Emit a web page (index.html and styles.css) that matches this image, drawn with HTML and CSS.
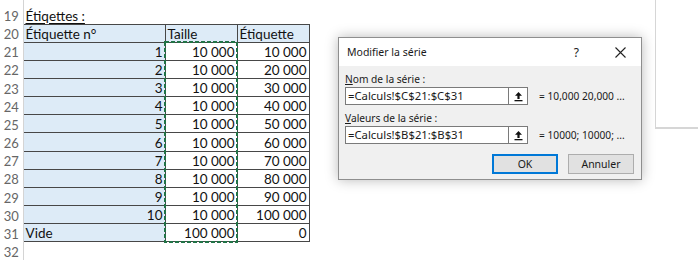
FILE: index.html
```html
<!DOCTYPE html>
<html lang="fr">
<head>
    <meta charset="UTF-8">
    <title>Calculs - Étiquettes</title>
    <link rel="stylesheet" href="styles.css">
</head>
<body>
    <div class="sheet">
        <table class="grid">
            <colgroup>
                <col class="c-num">
                <col class="c-a">
                <col class="c-b">
                <col class="c-c">
            </colgroup>
            <tr class="partial"><td class="num"></td><td></td><td></td><td></td></tr>
            <tr><td class="num">19</td><td class="title"><u>Étiqettes :</u></td><td></td><td></td></tr>
            <tr class="head">
                <td class="num">20</td>
                <td class="box blue">Étiquette n°</td>
                <td class="box blue">Taille</td>
                <td class="box blue">Étiquette</td>
            </tr>
            <tr><td class="num">21</td><td class="box blue r">1</td><td class="box r">10 000</td><td class="box r">10 000</td></tr>
            <tr><td class="num">22</td><td class="box blue r">2</td><td class="box r">10 000</td><td class="box r">20 000</td></tr>
            <tr><td class="num">23</td><td class="box blue r">3</td><td class="box r">10 000</td><td class="box r">30 000</td></tr>
            <tr><td class="num">24</td><td class="box blue r">4</td><td class="box r">10 000</td><td class="box r">40 000</td></tr>
            <tr><td class="num">25</td><td class="box blue r">5</td><td class="box r">10 000</td><td class="box r">50 000</td></tr>
            <tr><td class="num">26</td><td class="box blue r">6</td><td class="box r">10 000</td><td class="box r">60 000</td></tr>
            <tr><td class="num">27</td><td class="box blue r">7</td><td class="box r">10 000</td><td class="box r">70 000</td></tr>
            <tr><td class="num">28</td><td class="box blue r">8</td><td class="box r">10 000</td><td class="box r">80 000</td></tr>
            <tr><td class="num">29</td><td class="box blue r">9</td><td class="box r">10 000</td><td class="box r">90 000</td></tr>
            <tr><td class="num">30</td><td class="box blue r">10</td><td class="box r">10 000</td><td class="box r">100 000</td></tr>
            <tr><td class="num">31</td><td class="box blue">Vide</td><td class="box r">100 000</td><td class="box r">0</td></tr>
            <tr><td class="num">32</td><td></td><td></td><td></td></tr>
        </table>

        <!-- plage copiée B21:B31 -->
        <svg class="ants" width="74" height="202" viewBox="0 0 74 202">
            <rect x="1" y="1" width="72" height="200" fill="none" stroke="#217346" stroke-width="2" stroke-dasharray="4 2"/>
        </svg>

        <!-- cadre du graphique -->
        <div class="chart"></div>
    </div>

    <div class="dialog">
        <div class="dlg-title">
            <span>Modifier la série</span>
            <span class="help">?</span>
            <svg class="close" width="11" height="11" viewBox="0 0 11 11">
                <path d="M0.5 0.5 L10.5 10.5 M10.5 0.5 L0.5 10.5" stroke="#222" stroke-width="1.1"/>
            </svg>
        </div>
        <div class="dlg-body">
            <div class="lbl"><u>N</u>om de la série :</div>
            <div class="ref-row">
                <div class="ref">=Calculs!$C$21:$C$31</div>
                <div class="pick">
                    <svg width="11" height="11" viewBox="0 0 11 11">
                        <path d="M5.5 1 L9 4.8 L6.6 4.8 L6.6 8 L4.4 8 L4.4 4.8 L2 4.8 Z" fill="#111"/>
                        <rect x="1.5" y="9" width="8" height="1.3" fill="#111"/>
                    </svg>
                </div>
                <div class="preview">= 10,000 20,000 ...</div>
            </div>
            <div class="lbl"><u>V</u>aleurs de la série :</div>
            <div class="ref-row">
                <div class="ref">=Calculs!$B$21:$B$31</div>
                <div class="pick">
                    <svg width="11" height="11" viewBox="0 0 11 11">
                        <path d="M5.5 1 L9 4.8 L6.6 4.8 L6.6 8 L4.4 8 L4.4 4.8 L2 4.8 Z" fill="#111"/>
                        <rect x="1.5" y="9" width="8" height="1.3" fill="#111"/>
                    </svg>
                </div>
                <div class="preview">= 10000; 10000; ...</div>
            </div>
            <div class="actions">
                <button class="btn ok">OK</button>
                <button class="btn">Annuler</button>
            </div>
        </div>
    </div>
</body>
</html>
```
FILE: styles.css
```css
body {
    margin: 0;
    background: #fff;
    width: 698px;
    height: 260px;
    overflow: hidden;
    position: relative;
    font-family: Lato, "Liberation Sans", sans-serif;
}
.sheet {
    position: relative;
    display: flow-root;
    height: 260px;
}
.grid {
    border-collapse: collapse;
    table-layout: fixed;
    width: 309px;
    margin-top: -12.3px;
    font-size: 13.5px;
    color: #111;
}
.c-num { width: 23px; }
.c-a { width: 142px; }
.c-b { width: 72px; }
.c-c { width: 72px; }
.grid tr {
    height: 18.17px;
}
.grid td {
    padding: 0 2px;
    white-space: nowrap;
    overflow: visible;
    line-height: 15px;
    vertical-align: bottom;
}
.grid td.num {
    border-right: 1px solid #d4d4d4;
    color: #666;
    text-align: center;
    padding: 0;
    font-size: 13px;
}
.grid td.box {
    border: 1px solid #474747;
}
.grid td.blue {
    background: #ddebf7;
}
.grid td.r {
    text-align: right;
}
.grid td.title u {
    text-underline-offset: 2px;
}
.ants {
    position: absolute;
    left: 164px;
    top: 41px;
}
.chart {
    position: absolute;
    left: 655px;
    top: -2px;
    width: 60px;
    height: 128px;
    border: 1px solid #d6d6d6;
    border-bottom-width: 2px;
}

.dialog {
    position: absolute;
    left: 338px;
    top: 37px;
    width: 302px;
    height: 141px;
    border: 1px solid #8e8e8e;
    box-shadow: 0 0 12px rgba(0, 0, 0, 0.28);
    background: #f0f0f0;
    font-family: "Noto Sans", "Open Sans", sans-serif;
    font-size: 10.2px;
    color: #1a1a1a;
    display: flex;
    flex-direction: column;
}
.dlg-title {
    height: 28px;
    background: #fff;
    display: flex;
    align-items: center;
    padding-left: 8px;
    font-size: 10.5px;
}
.dlg-title .help {
    margin-left: auto;
    margin-right: 36px;
    font-size: 12px;
}
.dlg-title .close {
    margin-right: 15px;
}
.dlg-body {
    padding: 5px 7px 0 6px;
    flex: 1;
}
.lbl {
    height: 16px;
    line-height: 16px;
}
.ref-row {
    display: flex;
    align-items: center;
    height: 18px;
    margin-bottom: 5px;
    white-space: nowrap;
}
.ref {
    width: 160px;
    height: 16px;
    line-height: 16px;
    border: 1px solid #7a7a7a;
    background: #fff;
    padding-left: 2px;
    font-size: 11.3px;
}
.pick {
    width: 18px;
    height: 16px;
    border: 1px solid #7a7a7a;
    border-left: none;
    background: #fff;
    display: flex;
    align-items: center;
    justify-content: center;
}
.preview {
    margin-left: 11px;
}
.actions {
    display: flex;
    justify-content: flex-end;
    gap: 10px;
    margin-top: 10px;
}
.btn {
    width: 66px;
    height: 20px;
    padding: 0;
    border: 1px solid #adadad;
    background: #e1e1e1;
    font-family: inherit;
    font-size: 10.5px;
    color: #1a1a1a;
}
.btn.ok {
    border: 2px solid #0078d7;
}
```
